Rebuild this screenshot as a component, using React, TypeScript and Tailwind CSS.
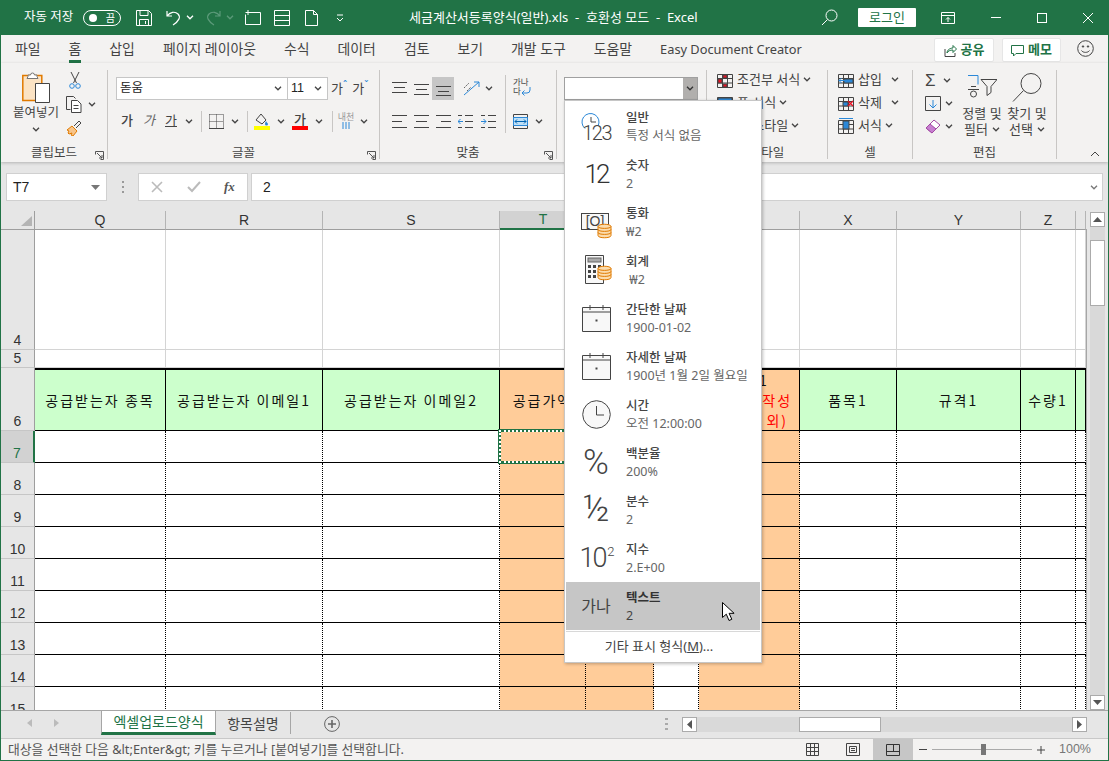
import React from 'react';

const Chev = ({ className = '', color = '#444' }: { className?: string; color?: string }) => (
  <svg width="8" height="5" viewBox="0 0 8 5" fill="none" stroke={color} strokeWidth="1.3" className={className}>
    <path d="M1 .8l3 3 3-3" />
  </svg>
);

const Launcher = () => (
  <svg width="9" height="9" viewBox="0 0 9 9" fill="none" stroke="#555" className="absolute right-[3px] top-[11px]">
    <path d="M.5 3.500v-3h8v8h-3M2 2l5 5M7 4v3H4" />
  </svg>
);

// title bar icons
const SaveIcon = () => (
  <svg width="16" height="16" viewBox="0 0 16 16" fill="none" stroke="#fff">
    <path d="M.5.5h12l3 3v12H.5zM4 .5v5h8v-5M3.500 15.500v-6h9v6M9.500 11v3" />
  </svg>
);
const UndoIcon = ({ color = '#fff' }: { color?: string }) => (
  <svg width="15" height="16" viewBox="0 0 15 16" fill="none" stroke={color} strokeWidth="1.2">
    <path d="M1 1v5h5M1 6c3-4 8-5 11-2 3 3 1 7-5 11" />
  </svg>
);
const RedoIcon = () => (
  <svg width="15" height="16" viewBox="0 0 15 16" fill="none" stroke="#5c9a7a" strokeWidth="1.2">
    <path d="M14 1v5H9M14 6C11 2 6 1 3 4 0 7 2 11 8 15" />
  </svg>
);

// alignment lines
const Lines = ({ d }: { d: string }) => (
  <svg width="15" height="15" viewBox="0 0 15 15" fill="none" stroke="#444">
    <path d={d} />
  </svg>
);

const GridIcon = ({ children }: { children?: React.ReactNode }) => (
  <svg width="16" height="16" viewBox="0 0 16 16" fill="none" stroke="#444">
    <path d="M.5 2.500h15v13H.5zM5.500 2.500v13M10.500 2.500v13M.5 6.500h15M.5 11h15" />
    {children}
  </svg>
);

const Coins = () => (
  <svg width="15" height="16" viewBox="0 0 15 16" fill="#fbdcae" stroke="#e07a00" className="absolute left-[16px] top-[10px]">
    <path d="M1 3.500c0-3 13-3 13 0v9c0 3-13 3-13 0z" />
    <path d="M1 3.500c0 2.500 13 2.500 13 0M1 6.500c0 2.500 13 2.500 13 0M1 9.500c0 2.500 13 2.500 13 0" fill="none" />
  </svg>
);

const CalendarIcon = () => (
  <svg width="29" height="27" viewBox="0 0 29 27" fill="#f8f8f8" stroke="#444">
    <path d="M.5 2.500h28v24H.5z" />
    <path d="M.5 7h28M8 0v5M21 0v5" fill="none" />
    <rect x="13.500" y="14.500" width="2" height="2" fill="#444" stroke="none" />
  </svg>
);

const menuItems: { title: string; sub: string; icon: React.ReactNode; active?: boolean }[] = [
  {
    title: '일반',
    sub: '특정 서식 없음',
    icon: (
      <div className="flex flex-col w-[30px]">
        <svg width="20" height="18" viewBox="0 0 20 18" fill="none" className="self-start">
          <path d="M4 16.500A8.500 8.500 0 1 1 17 14" stroke="#2b88d8" />
          <path d="M10 5v5h5" stroke="#444" />
        </svg>
        <span className="self-end -mt-[4px] text-[20px] leading-[15px] tracking-[-1.5px] font-light text-[#444] font-['Roboto',sans-serif]">123</span>
      </div>
    ),
  },
  {
    title: '숫자',
    sub: '2',
    icon: <span className="text-[26px] leading-none tracking-[-3px] font-light text-[#333] font-['Roboto',sans-serif]">12</span>,
  },
  {
    title: '통화',
    sub: '₩2',
    icon: (
      <div className="relative w-[30px] h-[26px] mt-[8px]">
        <div className="absolute left-0 top-0 w-[28px] h-[17px] border border-[#444] bg-[#f8f8f8] text-[14px] leading-[14px] text-[#444] text-center font-['Liberation_Sans',sans-serif]">
          [O]
        </div>
        <Coins />
      </div>
    ),
  },
  {
    title: '회계',
    sub: '\u00a0₩2',
    icon: (
      <div className="relative w-[30px] h-[30px]">
        <svg width="19" height="29" viewBox="0 0 19 29" fill="#f8f8f8" stroke="#444" className="absolute left-[4px] top-0">
          <path d="M.5.5h18v28H.5z" />
          <rect x="3" y="3" width="13" height="4" fill="#aaa" stroke="#666" />
          <path d="M3 10h3v3H3zM8 10h3v3H8zM13 10h3v3h-3zM3 15h3v3H3zM8 15h3v3H8zM3 20h3v3H3zM8 20h3v3H8z" fill="#444" stroke="none" />
        </svg>
        <Coins />
      </div>
    ),
  },
  { title: '간단한 날짜', sub: '1900-01-02', icon: <CalendarIcon /> },
  { title: '자세한 날짜', sub: '1900년 1월 2일 월요일', icon: <CalendarIcon /> },
  {
    title: '시간',
    sub: '오전 12:00:00',
    icon: (
      <svg width="29" height="29" viewBox="0 0 29 29" fill="#f8f8f8" stroke="#444">
        <circle cx="14.500" cy="14.500" r="13.800" />
        <path d="M14.500 6v9H22" fill="none" />
      </svg>
    ),
  },
  {
    title: '백분율',
    sub: '200%',
    icon: <span className="text-[35px] leading-none font-light text-[#444] font-['Roboto',sans-serif]">%</span>,
  },
  {
    title: '분수',
    sub: '2',
    icon: <span className="-mt-[3px] text-[36px] leading-none font-light text-[#444] font-['Roboto',sans-serif]">½</span>,
  },
  {
    title: '지수',
    sub: '2.E+00',
    icon: (
      <span className="text-[27px] leading-none tracking-[-2px] font-light text-[#444] font-['Roboto',sans-serif]">
        10<sup className="ml-[2px] text-[13px] -top-[11px]">2</sup>
      </span>
    ),
  },
  {
    title: '텍스트',
    sub: '2',
    active: true,
    icon: <span className="text-[16px] leading-none text-[#444]">가나</span>,
  },
];

const columns = ['Q', 'R', 'S', 'T', 'U', 'V', 'W', 'X', 'Y', 'Z', ''];
const headerLabels = ['공급받는자 종목', '공급받는자 이메일1', '공급받는자 이메일2', '공급가액', '', '', '', '품목1', '규격1', '수량1', ''];
const dataRows = [7, 8, 9, 10, 11, 12, 13, 14, 15];

function isOrange(i: number) {
  return i === 3 || i === 4 || i === 6;
}

function Sheet() {
  return (
    <div className="relative grid w-[1085px] h-[499px] overflow-hidden grid-cols-[34px_131px_157px_177px_86px_68px_45px_101px_97px_124px_55px_10px] grid-rows-[19px_120px_18px_63px_32px_32px_32px_32px_32px_32px_32px_32px_32px] bg-white text-[#111] font-['Noto_Sans_CJK_KR',sans-serif]">
      {/* column letters */}
      <div className="bg-[#e6e6e6] border-r border-b border-[#9e9e9e] flex items-end justify-end pr-[2px] pb-[3px]">
        <svg width="11" height="10" viewBox="0 0 11 10">
          <path d="M11 0v10H0z" fill="#b4b4b4" />
        </svg>
      </div>
      {columns.map((c, i) =>
        i === 3 ? (
          <div key={c} className="bg-[#d2d2d2] border-b-2 border-[#217346] flex items-center justify-center text-[14px] text-[#217346] font-['Liberation_Sans',sans-serif]">
            {c}
          </div>
        ) : (
          <div key={i} className="bg-[#e6e6e6] border-r border-[#b4b4b4] border-b border-b-[#9e9e9e] flex items-center justify-center text-[14px] text-[#333] font-['Liberation_Sans',sans-serif]">
            {c}
          </div>
        ),
      )}

      {/* rows 4 and 5 */}
      {[4, 5].map((r) => (
        <React.Fragment key={r}>
          <div className="bg-[#e6e6e6] border-r border-[#9e9e9e] border-b border-b-[#c6c6c6] flex items-end justify-center text-[14px] leading-[17px] text-[#333] font-['Liberation_Sans',sans-serif]">
            {r}
          </div>
          {columns.map((_, i) => (
            <div key={i} className="border-r border-b border-[#d4d4d4]" />
          ))}
        </React.Fragment>
      ))}

      {/* row 6 */}
      <div className="bg-[#e6e6e6] border-r border-[#9e9e9e] border-b border-b-[#c6c6c6] flex items-end justify-center text-[14px] leading-[17px] text-[#333] font-['Liberation_Sans',sans-serif]">
        6
      </div>
      {columns.map((_, i) => (
        <div
          key={i}
          className={
            isOrange(i)
              ? 'bg-[#ffcc99] border-t-2 border-t-black border-r border-r-black border-b border-b-black flex items-center justify-center text-center text-[14px] tracking-[2px] whitespace-nowrap'
              : 'bg-[#ccffcc] border-t-2 border-t-black border-r border-r-black border-b border-b-black flex items-center justify-center text-center text-[14px] tracking-[2px] whitespace-nowrap'
          }
        >
          {i === 6 ? (
            <div className="leading-[20px]">
              비고1
              <div className="text-[#ff0000]">(비고란 작성</div>
              <div className="text-[#ff0000]">(품목란 외)</div>
            </div>
          ) : (
            headerLabels[i]
          )}
        </div>
      ))}

      {/* data rows */}
      {dataRows.map((r) => (
        <React.Fragment key={r}>
          {r === 7 ? (
            <div className="bg-[#d2d2d2] border-r-2 border-[#217346] border-b border-b-[#c6c6c6] flex items-end justify-center text-[14px] leading-[17px] text-[#217346] font-['Liberation_Sans',sans-serif]">
              7
            </div>
          ) : (
            <div className="bg-[#e6e6e6] border-r border-[#9e9e9e] border-b border-b-[#c6c6c6] flex items-end justify-center text-[14px] leading-[17px] text-[#333] font-['Liberation_Sans',sans-serif]">
              {r}
            </div>
          )}
          {columns.map((_, i) => (
            <div
              key={i}
              className={
                isOrange(i)
                  ? 'relative bg-[#ffcc99] border-r border-b border-r-black border-b-black border-dotted [border-bottom-style:solid]'
                  : 'relative bg-white border-r border-b border-r-black border-b-black border-dotted [border-bottom-style:solid]'
              }
            >
              {r === 7 && i === 3 && (
                <div className="absolute z-10 -inset-[2px] border-[3px] border-[#217346]">
                  <div className="absolute -inset-[2px] border-2 border-dotted border-white" />
                </div>
              )}
            </div>
          ))}
        </React.Fragment>
      ))}
    </div>
  );
}

function FormatMenu() {
  return (
    <div className="absolute left-[563px] top-[100px] z-20 w-[198px] h-[563px] bg-white border border-[#c6c6c6] shadow-[1px_1px_3px_rgba(0,0,0,0.25)] px-px pt-px flex flex-col">
      {menuItems.map((m) => (
        <div key={m.title} className={m.active ? 'flex h-[48px] shrink-0 bg-[#c6c6c6]' : 'flex h-[48px] shrink-0'}>
          <div className="w-[60px] shrink-0 flex items-center justify-center">{m.icon}</div>
          <div className="flex flex-col justify-center pt-[1px] text-[12.5px] leading-[18px] whitespace-nowrap">
            <span className={m.active ? 'font-bold text-[#333]' : 'font-medium text-[#444]'}>{m.title}</span>
            <span className={m.active ? 'text-[#444]' : 'text-[#666]'}>{m.sub}</span>
          </div>
        </div>
      ))}
      <div className="h-px mt-px bg-[#d8d8d8]" />
      <div className="flex-1 flex items-center justify-center text-[13px] text-[#444] pr-[8px]">
        기타 표시 형식(<span className="underline">M</span>)...
      </div>
    </div>
  );
}

const Sep = () => <div className="w-px h-[89px] mt-[7px] bg-[#c8c6c4] shrink-0" />;
const MiniSep = () => <div className="w-px h-[21px] bg-[#c8c6c4] shrink-0" />;

function Group({ className, label, launcher, children }: { className: string; label?: string; launcher?: boolean; children: React.ReactNode }) {
  return (
    <div className={`${className} shrink-0 flex flex-col h-full`}>
      <div className="flex-1 min-h-0">{children}</div>
      <div className="relative h-[22px] pt-[5px] flex items-center justify-center text-[12.5px] text-[#444]">
        {label}
        {launcher && <Launcher />}
      </div>
    </div>
  );
}

function RowBtn({ icon, text, chevClass }: { icon: React.ReactNode; text: string; chevClass: string }) {
  return (
    <div className="flex items-center h-[23px] whitespace-nowrap text-[13px] text-[#444]">
      <span className="w-[16px] h-[16px] flex shrink-0">{icon}</span>
      <span className="ml-[4px]">{text}</span>
      <Chev className={chevClass} />
    </div>
  );
}

function Ribbon() {
  return (
    <div className="relative z-10 h-[99px] flex bg-[#f3f2f1] shadow-[0_1px_3px_rgba(0,0,0,0.22)] shrink-0">
      {/* clipboard */}
      <Group className="w-[106px]" label="클립보드" launcher>
        <div className="flex pl-[11px] pt-[9px]">
          <div className="w-[48px] flex flex-col items-center text-[12.5px] text-[#444] whitespace-nowrap">
            <svg width="28" height="31" viewBox="0 0 28 31" fill="none">
              <path d="M.8 3.500h19v25H.8z" fill="#fbe3c4" stroke="#e07a00" strokeWidth="1.500" />
              <path d="M6 4.500V3h2.500a2 2 0 0 1 4 0H15v1.500l1 2H5z" fill="#fff" stroke="#777" />
              <path d="M13.500 11.500h14v19h-14z" fill="#fff" stroke="#444" />
            </svg>
            <span className="mt-[1px] leading-[18px]">붙여넣기</span>
            <Chev className="mt-[5px]" />
          </div>
          <div className="ml-[6px] flex flex-col">
            <svg width="12" height="17" viewBox="0 0 12 17" fill="none" className="ml-[3px]">
              <path d="M2 0l5.500 11M10 0L4.500 11" stroke="#444" />
              <circle cx="3" cy="14" r="2.300" stroke="#2b88d8" />
              <circle cx="9" cy="14" r="2.300" stroke="#2b88d8" />
            </svg>
            <div className="flex items-center mt-[7px]">
              <svg width="17" height="17" viewBox="0 0 17 17" fill="none" stroke="#444">
                <path d="M4.500 13.500H.5V.5h7l2 2" />
                <path d="M5.500 4.500h6l3.500 3.500v8.500H5.500zM7.500 9.500h5M7.500 12.500h5" fill="#fff" />
              </svg>
              <Chev className="ml-[5px]" />
            </div>
            <svg width="16" height="16" viewBox="0 0 16 16" fill="none" className="mt-[7px]">
              <path d="M1 10l5-4 5 5-4 5-2-1 1-2-3 1-1-1 1-2z" fill="#f8c58a" stroke="#e07a00" />
              <path d="M8 6l5-5 2 2-5 5" stroke="#444" />
            </svg>
          </div>
        </div>
      </Group>
      <Sep />

      {/* font */}
      <Group className="w-[271px]" label="글꼴" launcher>
        <div className="flex flex-col pl-[8px] pt-[14px]">
          <div className="flex items-center h-[23px]">
            <div className="w-[172px] h-[23px] bg-white border border-[#c6c6c6] flex items-center pl-[3px] pr-[5px] justify-between text-[12.5px] text-[#222]">
              돋움
              <Chev />
            </div>
            <div className="w-[40px] h-[23px] bg-white border border-l-0 border-[#c6c6c6] flex items-center pl-[3px] pr-[5px] justify-between text-[12.5px] text-[#222] font-['Liberation_Sans',sans-serif]">
              11
              <Chev />
            </div>
            <span className="ml-[3px] text-[13px] text-[#444] leading-none">가<sup className="text-[10px] text-[#2b88d8] -top-[4px]">ˆ</sup></span>
            <span className="ml-[5px] text-[13px] text-[#444] leading-none">가<sup className="text-[10px] text-[#2b88d8] -top-[4px]">ˇ</sup></span>
          </div>
          <div className="flex items-center h-[24px] mt-[9px] text-[13px] text-[#444]">
            <span className="w-[22px] text-center font-medium">가</span>
            <span className="w-[22px] text-center italic text-[#666]">가</span>
            <span className="w-[22px] text-center underline">가</span>
            <span className="w-[14px] flex justify-center"><Chev /></span>
            <span className="w-[5px]" />
            <MiniSep />
            <span className="w-[28px] flex justify-center">
              <svg width="15" height="15" viewBox="0 0 15 15" fill="none" stroke="#444">
                <path d="M.5.5h14M.5 7.500h14M.5.5v14M7.500.5v14M14.500.5v14" strokeDasharray="1 1" />
                <path d="M0 14.500h15" />
              </svg>
            </span>
            <span className="w-[9px] flex justify-center"><Chev /></span>
            <span className="w-[8px]" />
            <MiniSep />
            <span className="w-[28px] flex justify-center">
              <svg width="16" height="18" viewBox="0 0 16 18" fill="none">
                <path d="M2 8l5-6 5 6-4 4z" stroke="#444" />
                <path d="M12 9c1 2 2 2 2 3a1 1 0 0 1-3 0c0-1 .5-2 1-3z" fill="#2b88d8" />
                <rect x="0" y="14" width="16" height="4" fill="#ffff00" />
              </svg>
            </span>
            <span className="w-[9px] flex justify-center"><Chev /></span>
            <span className="w-[28px] ml-[1px] flex flex-col items-center font-medium leading-[14px]">
              가
              <span className="w-[16px] h-[4px] bg-[#ff0000]" />
            </span>
            <span className="w-[9px] flex justify-center"><Chev /></span>
            <span className="w-[9px]" />
            <MiniSep />
            <span className="w-[26px] flex flex-col items-center text-[9px] leading-[9px] text-[#999]">
              내천
              <svg width="10" height="9" viewBox="0 0 10 9" stroke="#2b88d8" fill="none"><path d="M2 1v7M5 1v7M8 1v7" /></svg>
            </span>
            <span className="w-[10px] flex justify-center"><Chev /></span>
          </div>
        </div>
      </Group>
      <Sep />

      {/* alignment */}
      <Group className="w-[176px]" label="맞춤" launcher>
        <div className="flex pl-[8px] pt-[14px]">
          <div className="w-[117px] flex flex-col">
            <div className="flex items-center h-[23px]">
              <span className="w-[22px] flex justify-center"><Lines d="M0 1.500h15M2 6.500h11M0 11.500h15" /></span>
              <span className="w-[22px] flex justify-center"><Lines d="M0 3.500h15M2 8.500h11M0 13.500h15" /></span>
              <span className="w-[22px] h-[23px] bg-[#c6c6c6] flex items-center justify-center"><Lines d="M0 5.500h15M2 10.500h11M0 14.500h15" /></span>
              <span className="w-[28px] ml-[3px] flex justify-center">
                <svg width="17" height="15" viewBox="0 0 17 15" fill="none">
                  <path d="M1 14L16 1M11 1h5v5" stroke="#2b88d8" />
                  <path d="M1 7l5-5M4 10l4-4" stroke="#666" strokeDasharray="2 1" />
                </svg>
              </span>
              <Chev />
            </div>
            <div className="flex items-center h-[24px] mt-[9px]">
              <span className="w-[22px] flex justify-center"><Lines d="M0 1.500h15M0 7.500h10M0 13.500h15" /></span>
              <span className="w-[22px] flex justify-center"><Lines d="M0 1.500h15M2 7.500h11M0 13.500h15" /></span>
              <span className="w-[22px] flex justify-center"><Lines d="M0 1.500h15M5 7.500h10M0 13.500h15" /></span>
              <span className="w-[23px] flex justify-center">
                <svg width="15" height="15" viewBox="0 0 15 15" fill="none"><path d="M7 1.500h8M7 7.500h8M7 13.500h8M0 1.500h4M0 13.500h4" stroke="#444" /><path d="M5 7.500H0M2.500 5L0 7.500 2.500 10" stroke="#2b88d8" /></svg>
              </span>
              <span className="w-[22px] flex justify-center">
                <svg width="15" height="15" viewBox="0 0 15 15" fill="none"><path d="M7 1.500h8M7 7.500h8M7 13.500h8M0 1.500h4M0 13.500h4" stroke="#444" /><path d="M0 7.500h5M2.500 5L5 7.500 2.500 10" stroke="#2b88d8" /></svg>
              </span>
            </div>
          </div>
          <div className="w-px h-[58px] -mt-[2px] bg-[#c8c6c4]" />
          <div className="flex flex-col pl-[7px]">
            <div className="h-[23px] w-[18px] text-[8.5px] leading-[9px] text-[#444] relative">
              가나
              <br />
              다
              <svg width="10" height="9" viewBox="0 0 10 9" fill="none" stroke="#2b88d8" className="absolute left-[8px] top-[10px]"><path d="M9 0v3a3 3 0 0 1-3 3H1M3.500 3.500L1 6l2.500 2.500" /></svg>
            </div>
            <div className="flex items-center h-[24px] mt-[9px]">
              <svg width="15" height="15" viewBox="0 0 15 15" fill="none">
                <path d="M.5.5h14v14H.5z" stroke="#444" />
                <path d="M.5 3.500h14v8H.5z" fill="#bfe0f7" stroke="#2b88d8" />
                <path d="M2 7.500h11M4 5.500l-2 2 2 2M11 5.500l2 2-2 2" stroke="#0063b1" />
              </svg>
              <Chev className="ml-[7px]" />
            </div>
          </div>
        </div>
      </Group>
      <Sep />

      {/* number */}
      <Group className="w-[149px]">
        <div className="pl-[7px] pt-[14px]">
          <div className="w-[134px] h-[23px] bg-white border border-[#a0a0a0] flex justify-end">
            <div className="w-[14px] h-full bg-[#b1afad] flex items-center justify-center"><Chev color="#333" /></div>
          </div>
        </div>
      </Group>
      <Sep />

      {/* styles */}
      <Group className="w-[120px]" label="스타일">
        <div className="pl-[10px] pt-[5px] flex flex-col">
          <RowBtn
            text="조건부 서식"
            chevClass="ml-[3px]"
            icon={
              <GridIcon>
                <rect x="6" y="3" width="4" height="3" fill="#e81123" />
                <rect x="1" y="7" width="4" height="4" fill="#e81123" />
                <rect x="6" y="12" width="4" height="3" fill="#e81123" />
              </GridIcon>
            }
          />
          <RowBtn text="표 서식" chevClass="ml-[3px]" icon={<GridIcon><rect x="1" y="3" width="14" height="3" fill="#2b88d8" /></GridIcon>} />
          <RowBtn text="셀 스타일" chevClass="ml-[3px]" icon={<GridIcon />} />
        </div>
      </Group>
      <Sep />

      {/* cells */}
      <Group className="w-[84px]" label="셀">
        <div className="pl-[10px] pt-[5px] flex flex-col">
          <RowBtn
            text="삽입"
            chevClass="ml-[9px]"
            icon={
              <GridIcon>
                <rect x="6" y="7" width="9" height="4" fill="#2b88d8" />
                <path d="M9 8.500H1M3.500 6L1 8.500 3.500 11" stroke="#2b88d8" />
              </GridIcon>
            }
          />
          <RowBtn
            text="삭제"
            chevClass="ml-[9px]"
            icon={
              <GridIcon>
                <rect x="5" y="7" width="5" height="4" fill="#2b88d8" />
                <path d="M10 6l5 5M15 6l-5 5" stroke="#e81123" strokeWidth="1.300" />
              </GridIcon>
            }
          />
          <RowBtn
            text="서식"
            chevClass="ml-[3px]"
            icon={
              <GridIcon>
                <rect x="5" y="3" width="6" height="8" fill="#2b88d8" />
                <path d="M1 .5h14" stroke="#2b88d8" />
              </GridIcon>
            }
          />
        </div>
      </Group>
      <Sep />

      {/* editing */}
      <Group className="w-[143px]" label="편집">
        <div className="flex pl-[12px] pt-[6px]">
          <div className="w-[34px] flex flex-col">
            <div className="flex items-center h-[23px] gap-[7px]">
              <span className="text-[17px] leading-none text-[#444] font-['Liberation_Sans',sans-serif]">Σ</span>
              <Chev />
            </div>
            <div className="flex items-center h-[23px] gap-[4px]">
              <svg width="16" height="15" viewBox="0 0 16 15" fill="none">
                <path d="M.5.5h15v14H.5z" stroke="#444" />
                <path d="M8 4v8M4.500 8.500L8 12l3.500-3.500" stroke="#2b88d8" />
              </svg>
              <Chev />
            </div>
            <div className="flex items-center h-[23px] gap-[4px]">
              <svg width="16" height="15" viewBox="0 0 16 15" fill="none">
                <path d="M1 9l8-8 6 5-8 8z" fill="#fff" stroke="#a349a4" />
                <path d="M1 9l4-4 6 5-4 4z" fill="#c77fd0" stroke="#a349a4" />
              </svg>
              <Chev />
            </div>
          </div>
          <div className="w-[44px] ml-[1px] flex flex-col items-center text-[13px] leading-[16px] text-[#444] whitespace-nowrap">
            <svg width="30" height="24" viewBox="0 0 30 24" fill="none" className="mt-[5px] mb-[7px]">
              <path d="M1 1.500h10v9" stroke="#2b88d8" />
              <path d="M4 12.500h5M1 15.500h11" stroke="#444" />
              <circle cx="6.500" cy="20" r="3" stroke="#444" />
              <path d="M14 5.500h16l-6 7v6l-4 3v-9z" stroke="#444" />
            </svg>
            <span>정렬 및</span>
            <span className="flex items-center">필터<Chev className="ml-[4px]" /></span>
          </div>
          <div className="w-[44px] ml-[1px] flex flex-col items-center text-[13px] leading-[16px] text-[#444] whitespace-nowrap">
            <svg width="30" height="29" viewBox="0 0 30 29" fill="none" stroke="#444" className="mt-[4px] mb-[3px]">
              <circle cx="19" cy="10.500" r="10" />
              <path d="M11.500 17.500L1 28.500" />
            </svg>
            <span>찾기 및</span>
            <span className="flex items-center">선택<Chev className="ml-[4px]" /></span>
          </div>
        </div>
      </Group>
      <Sep />

      <div className="flex-1 flex items-end justify-end pr-[8px] pb-[5px]">
        <svg width="10" height="6" viewBox="0 0 10 6" fill="none" stroke="#444"><path d="M1 5l4-4 4 4" /></svg>
      </div>
    </div>
  );
}

const ScrollBtn = ({ d, className = '' }: { d: string; className?: string }) => (
  <div className={`w-[15px] h-[15px] bg-white border border-[#ababab] flex items-center justify-center shrink-0 ${className}`}>
    <svg width="9" height="9" viewBox="0 0 9 9" fill="#555"><path d={d} /></svg>
  </div>
);

export default function App() {
  return (
    <div className="relative w-[1109px] h-[761px] overflow-hidden flex flex-col border-x border-b border-[#217346] bg-[#e6e6e6] font-['Noto_Sans','Noto_Sans_CJK_KR',sans-serif]">
      <FormatMenu />

      {/* cursor */}
      <svg width="13" height="20" viewBox="0 0 13 20" className="absolute left-[721px] top-[602px] z-30">
        <path d="M.5.5v15l3.800-3.300L7 18.500l2.800-1.200-2.700-6h5z" fill="#fff" stroke="#000" />
      </svg>

      {/* title bar */}
      <div className="h-[35px] shrink-0 flex items-center bg-[#217346] text-white text-[12.5px] pl-[23px] whitespace-nowrap">
        <span className="w-[52px]">자동 저장</span>
        <div className="ml-[7px] w-[38px] h-[16px] rounded-full border border-white flex items-center justify-between pl-[5px] pr-[5px]">
          <span className="w-[8px] h-[8px] rounded-full bg-white" />
          <span className="text-[10px] leading-none">끔</span>
        </div>
        <span className="ml-[15px] flex"><SaveIcon /></span>
        <span className="ml-[14px] flex"><UndoIcon /></span>
        <Chev color="#fff" className="ml-[5px]" />
        <span className="ml-[12px] flex"><RedoIcon /></span>
        <Chev color="#5c9a7a" className="ml-[5px]" />
        <svg width="16" height="15" viewBox="0 0 16 15" fill="none" stroke="#fff" className="ml-[11px]">
          <path d="M5 2.500h10.500v12H.5v-10M3 0v5M.5 2.500h5" />
        </svg>
        <svg width="16" height="16" viewBox="0 0 16 16" fill="none" stroke="#fff" className="ml-[13px]">
          <path d="M.5.5h15v15H.5zM.5 5.500h15M.5 10.500h15" />
        </svg>
        <svg width="13" height="16" viewBox="0 0 13 16" fill="none" stroke="#fff" className="ml-[15px]">
          <path d="M.5.5h8l4 4v11H.5zM8.500.5v4h4" />
        </svg>
        <svg width="8" height="8" viewBox="0 0 8 8" fill="none" stroke="#fff" className="ml-[18px]">
          <path d="M1 1h6M1 4l3 3 3-3" />
        </svg>
        <span className="ml-[65px] w-[288px] text-[13px] whitespace-pre text-center">세금계산서등록양식(일반).xls  -  호환성 모드  -  Excel</span>
        <svg width="17" height="17" viewBox="0 0 17 17" fill="none" stroke="#fff" className="ml-[124px]">
          <circle cx="10.500" cy="6.500" r="5.500" />
          <path d="M6.500 10.500L1 16" />
        </svg>
        <div className="ml-[20px] w-[58px] h-[19px] bg-white rounded-[1px] text-[13px] text-[#217346] flex items-center justify-center">로그인</div>
        <svg width="14" height="12" viewBox="0 0 14 12" fill="none" stroke="#fff" className="ml-[25px]">
          <path d="M.5.5h13v11H.5zM.5 3.500h13M7 10V5.500M5 7.500l2-2 2 2" />
        </svg>
        <div className="ml-[36px] w-[10px] h-px bg-white" />
        <div className="ml-[36px] w-[10px] h-[10px] border border-white" />
        <svg width="10" height="10" viewBox="0 0 10 10" stroke="#fff" className="ml-[36px]">
          <path d="M0 0l10 10M10 0L0 10" />
        </svg>
      </div>

      {/* tabs */}
      <div className="h-[28px] shrink-0 flex bg-[#f3f2f1] pl-[14px] gap-[28px] text-[13.9px] text-[#444] whitespace-nowrap">
        {['파일', '홈', '삽입', '페이지 레이아웃', '수식', '데이터', '검토', '보기', '개발 도구', '도움말'].map((t) => (
          <div key={t} className={t === '홈' ? 'flex items-center pt-[4px] border-b-[3px] border-[#217346]' : 'flex items-center pt-[4px] border-b-[3px] border-transparent'}>
            {t}
          </div>
        ))}
        <div className="flex items-center pt-[4px] border-b-[3px] border-transparent text-[12.8px]">Easy Document Creator</div>
        <div className="flex-1 flex items-start justify-end pt-[3px] pr-[14px] text-[13px] font-bold text-[#217346]">
          <div className="w-[60px] h-[24px] bg-white rounded-[2px] border border-[#e6e6e6] flex items-center justify-center gap-[4px]">
            <svg width="13" height="13" viewBox="0 0 13 13" fill="none" stroke="#444"><path d="M1 5v7.500h10V9" /><path d="M3 9c0-3 3-5 6-5V1.500l3.500 3.500L9 8.500V6C6 6 4 7 3 9z" stroke="#217346" /></svg>
            공유
          </div>
          <div className="ml-[8px] w-[59px] h-[24px] bg-white rounded-[2px] border border-[#e6e6e6] flex items-center justify-center gap-[4px]">
            <svg width="13" height="13" viewBox="0 0 13 13" fill="none" stroke="#217346"><path d="M.5 1.500h12v8H5l-2.500 2.500V9.500h-2z" /></svg>
            메모
          </div>
          <svg width="17" height="17" viewBox="0 0 17 17" fill="none" stroke="#444" className="ml-[16px] mt-[2px]">
            <circle cx="8.500" cy="8.500" r="7.800" />
            <circle cx="6" cy="6.500" r=".7" fill="#444" />
            <circle cx="11" cy="6.500" r=".7" fill="#444" />
            <path d="M4.500 10.500c1.500 2.500 6.500 2.500 8 0" />
          </svg>
        </div>
      </div>

      <Ribbon />

      {/* formula bar */}
      <div className="h-[49px] shrink-0 flex pt-[11px] pl-[5px] pr-[5px] text-[14px] text-[#222] font-['Liberation_Sans',sans-serif]">
        <div className="w-[101px] h-[28px] bg-white border border-[#d0d0d0] flex items-center justify-between pl-[6px] pr-[4px]">
          T7
          <svg width="9" height="5" viewBox="0 0 9 5" fill="#777" className="mr-[2px]"><path d="M0 0h9L4.500 5z" /></svg>
        </div>
        <div className="w-[31px] flex flex-col items-center justify-center gap-[3px] h-[28px]">
          <span className="w-[2px] h-[2px] bg-[#999]" />
          <span className="w-[2px] h-[2px] bg-[#999]" />
          <span className="w-[2px] h-[2px] bg-[#999]" />
        </div>
        <div className="w-[110px] h-[28px] bg-white border border-[#d0d0d0] flex items-center pl-[12px]">
          <svg width="12" height="12" viewBox="0 0 12 12" stroke="#bbb" strokeWidth="1.600"><path d="M1 1l10 10M11 1L1 11" /></svg>
          <svg width="14" height="12" viewBox="0 0 14 12" fill="none" stroke="#bbb" strokeWidth="2" className="ml-[24px]"><path d="M1 6l4 4 8-9" /></svg>
          <span className="ml-[23px] font-['Liberation_Serif',serif] italic font-bold text-[13px] text-[#555]">fx</span>
        </div>
        <div className="ml-[3px] flex-1 h-[28px] bg-white border border-[#d0d0d0] flex items-center justify-between pl-[11px] pr-[4px]">
          2
          <Chev color="#777" />
        </div>
      </div>

      {/* sheet + vertical scrollbar */}
      <div className="h-[499px] shrink-0 flex">
        <Sheet />
        <div className="flex-1 pl-[4px] pt-[1px] flex flex-col relative">
          <ScrollBtn d="M4.500 2L9 7H0z" />
          <div className="w-[15px] flex-1 bg-[#d9d9d9]">
            <div className="mt-[13px] w-[15px] h-[66px] bg-white border border-[#ababab]" />
          </div>
          <ScrollBtn d="M0 2h9L4.500 7z" />
          <div className="absolute left-0 top-[18px] bottom-0 w-px bg-[#a6a6a6]" />
        </div>
      </div>

      {/* sheet tabs */}
      <div className="h-[28px] shrink-0 flex items-start border-t border-[#a6a6a6] text-[14px] text-[#444] whitespace-nowrap">
        <div className="w-[100px] h-full flex items-center gap-[22px] pl-[26px] pb-[4px]">
          <svg width="5" height="8" viewBox="0 0 5 8" fill="#bbb"><path d="M5 0v8L0 4z" /></svg>
          <svg width="5" height="8" viewBox="0 0 5 8" fill="#bbb"><path d="M0 0v8l5-4z" /></svg>
        </div>
        <div className="w-[115px] h-[24px] bg-white border-x border-[#a6a6a6] border-b-[3px] border-b-[#217346] flex items-center justify-center text-[#217346]">엑셀업로드양식</div>
        <div className="w-[75px] h-[22px] mt-[1px] border-r border-[#a6a6a6] flex items-center justify-center">항목설명</div>
        <svg width="16" height="16" viewBox="0 0 16 16" fill="none" stroke="#666" className="ml-[33px] mt-[5px]">
          <circle cx="8" cy="8" r="7.400" />
          <path d="M8 4v8M4 8h8" strokeWidth="1.600" />
        </svg>
        <div className="ml-[325px] mt-[7px] flex flex-col gap-[3px]">
          <span className="w-[3px] h-[2px] bg-[#aaa]" />
          <span className="w-[3px] h-[2px] bg-[#aaa]" />
          <span className="w-[3px] h-[2px] bg-[#aaa]" />
        </div>
        <div className="ml-[14px] mt-[6px] flex">
          <ScrollBtn d="M7 0v9L2 4.500z" />
          <div className="w-[375px] h-[15px] bg-[#d9d9d9]">
            <div className="ml-[102px] w-[82px] h-[15px] bg-white border border-[#ababab]" />
          </div>
          <ScrollBtn d="M2 0v9l5-4.500z" />
        </div>
      </div>

      {/* status bar */}
      <div className="h-[22px] shrink-0 flex items-center bg-[#f3f2f1] border-t border-[#c8c8c8] pl-[7px] text-[12.8px] text-[#555] whitespace-nowrap">
        <span className="w-[798px]">대상을 선택한 다음 {'&lt;Enter&gt;'} 키를 누르거나 [붙여넣기]를 선택합니다.</span>
        <svg width="13" height="13" viewBox="0 0 13 13" fill="none" stroke="#444"><path d="M.5.500h12v12H.5zM4.500.5v12M8.500.5v12M.5 4.500h12M.5 8.500h12" /></svg>
        <svg width="14" height="13" viewBox="0 0 14 13" fill="none" stroke="#444" className="ml-[27px]"><path d="M.5.5h13v12H.5zM3.500 3.500h7v6h-7zM5 5.500h4M5 7.500h4" /></svg>
        <div className="ml-[13px] w-[40px] h-[21px] bg-[#c6c6c6] flex items-center justify-center">
          <svg width="14" height="12" viewBox="0 0 14 12" fill="none" stroke="#333"><path d="M.5.5h13v11H.5zM.5 7.500h13M7.500.5v7" /></svg>
        </div>
        <div className="ml-[6px] w-[8px] h-px bg-[#444]" />
        <div className="ml-[5px] w-[100px] h-px bg-[#aaa] flex items-center">
          <div className="ml-[49px] w-[5px] h-[11px] bg-[#777]" />
        </div>
        <svg width="8" height="8" viewBox="0 0 8 8" stroke="#444" className="ml-[5px]"><path d="M4 0v8M0 4h8" /></svg>
        <span className="ml-[14px] text-[12.5px] text-[#777] font-['Liberation_Sans',sans-serif]">100%</span>
      </div>
    </div>
  );
}
